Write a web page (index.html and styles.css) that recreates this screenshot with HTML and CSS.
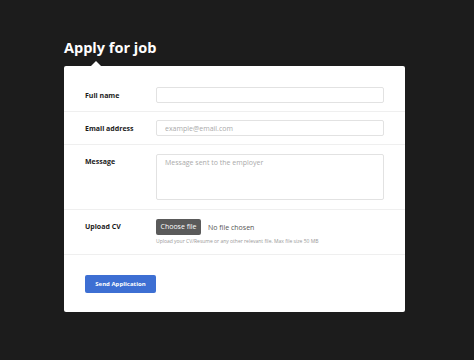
FILE: index.html
```html
<!DOCTYPE html>
<html>
<head>
    <meta charset="UTF-8">
    <title>Apply for job</title>
    <link rel="stylesheet" href="styles.css">
</head>
<body>
    <div class="page">
        <h1 class="title">Apply for job</h1>
        <form class="card">
            <div class="row">
                <label class="label" for="fullName">Full name</label>
                <input id="fullName" class="input" type="text">
            </div>
            <div class="row">
                <label class="label" for="email">Email address</label>
                <input id="email" class="input" type="email" placeholder="example@email.com">
            </div>
            <div class="row row-top">
                <label class="label" for="message">Message</label>
                <textarea id="message" class="input textarea" placeholder="Message sent to the employer"></textarea>
            </div>
            <div class="row row-top">
                <label class="label label-file">Upload CV</label>
                <div class="file-field">
                    <div class="file-picker">
                        <span class="file-button">Choose file</span>
                        <span class="file-name">No file chosen</span>
                    </div>
                    <div class="help">Upload your CV/Resume or any other relevant file. Max file size 50 MB</div>
                </div>
            </div>
            <div class="actions">
                <button type="button" class="button">Send Application</button>
            </div>
        </form>
    </div>
</body>
</html>
```

FILE: styles.css
```css
body {
    margin: 0;
    background-color: #1c1c1c;
    font-family: "Open Sans", "Liberation Sans", sans-serif;
}

.page {
    width: 341px;
    padding: 37px 0 0 64px;
}

.title {
    margin: 0 0 7px;
    font-size: 14.5px;
    line-height: 22px;
    font-weight: 700;
    color: #fff;
}

.card {
    position: relative;
    display: flex;
    flex-direction: column;
    padding-top: 13px;
    background-color: #fff;
    border-radius: 2px;
}

.card:before {
    content: "";
    position: absolute;
    top: -5px;
    left: 27px;
    border-left: 5px solid transparent;
    border-right: 5px solid transparent;
    border-bottom: 5px solid #fff;
}

.row {
    display: grid;
    grid-template-columns: 71px 228px;
    align-items: center;
    padding: 8px 21px;
    border-bottom: 1px solid #efefef;
}

.row-top {
    align-items: start;
    padding-top: 9px;
    padding-bottom: 9px;
}

.label {
    font-size: 7px;
    font-weight: 700;
    color: #1a1a1a;
}

.row-top .label {
    line-height: 16px;
}

.input {
    box-sizing: border-box;
    width: 228px;
    height: 16px;
    margin: 0;
    padding: 0 8px;
    border: 1px solid #e2e2e2;
    border-radius: 2px;
    font-family: inherit;
    font-size: 7px;
    color: #333;
    outline: none;
}

.input::placeholder {
    color: #aaa;
}

.textarea {
    height: 46px;
    padding: 3px 8px;
    resize: none;
}

.file-picker {
    display: flex;
    align-items: center;
    gap: 7px;
}

.file-button {
    width: 45px;
    height: 16px;
    line-height: 16px;
    text-align: center;
    border-radius: 2px;
    background-color: #5a5a5a;
    color: #fff;
    font-size: 7px;
}

.file-name {
    font-size: 7px;
    color: #555;
}

.help {
    margin-top: 3px;
    font-size: 5px;
    line-height: 7px;
    color: #999;
}

.actions {
    display: flex;
    padding: 20px 21px 19px;
}

.button {
    width: 71px;
    height: 18px;
    padding: 0;
    border: none;
    border-radius: 2px;
    background-color: #3d6fd3;
    color: #fff;
    font-family: inherit;
    font-size: 6px;
    font-weight: 700;
    cursor: pointer;
}
```
